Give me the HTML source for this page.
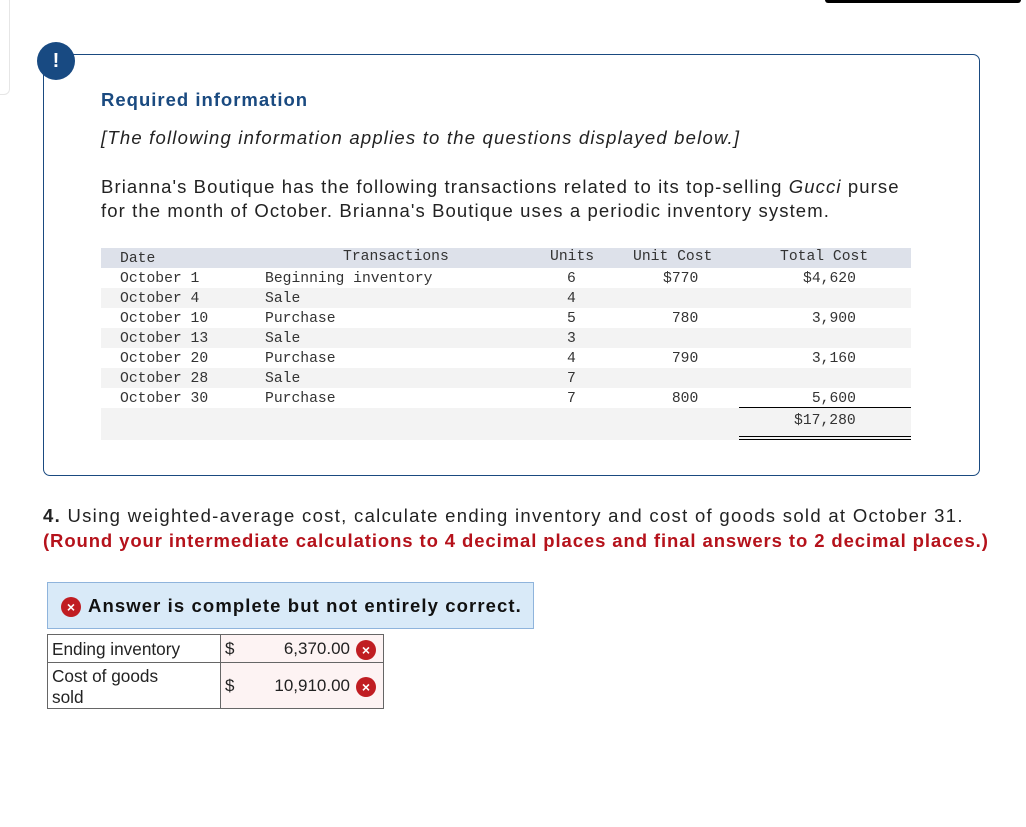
<!DOCTYPE html>
<html><head><meta charset="utf-8"><style>
*{margin:0;padding:0;box-sizing:border-box}
body{width:1026px;height:827px;background:#fff;position:relative;overflow:hidden;font-family:"Liberation Sans",sans-serif;color:#222}
.abs{position:absolute}
.card{left:43px;top:54px;width:937px;height:422px;border:1px solid #1a4a80;border-radius:7px}
.bang{left:37px;top:42px;width:38px;height:38px;border-radius:50%;background:#184a82;color:#fff;font-weight:bold;font-size:20px;text-align:center;line-height:38px}
.t{font-size:18.5px;white-space:nowrap;letter-spacing:1.1px}
.mono{font-family:"Liberation Mono",monospace;font-size:14.7px;color:#333;white-space:pre}
.row{position:absolute;left:101px;width:810px;height:20px}
</style></head><body>
<div class="abs" style="left:825px;top:0;width:196px;height:3px;background:#000;border-radius:0 0 3px 3px"></div>
<div class="abs" style="left:-10px;top:-5px;width:20px;height:100px;border:1px solid #e6e6e6;border-radius:6px"></div>
<div class="abs card"></div>
<div class="abs bang">!</div>
<div class="abs t" style="left:101px;top:89px;font-weight:bold;color:#1a4a80;letter-spacing:1px">Required information</div>
<div class="abs t" style="left:101px;top:127px;font-style:italic;letter-spacing:1.2px">[The following information applies to the questions displayed below.]</div>
<div class="abs t" style="left:101px;top:175px;line-height:24px">Brianna's Boutique has the following transactions related to its top-selling <i>Gucci</i> purse<br>for the month of October. Brianna's Boutique uses a periodic inventory system.</div>

<div class="row" style="top:248px;background:#dde1ea"></div>
<div class="row" style="top:288px;background:#f3f3f3"></div>
<div class="row" style="top:328px;background:#f3f3f3"></div>
<div class="row" style="top:368px;background:#f3f3f3"></div>
<div class="row" style="top:408px;height:32px;background:#f3f3f3"></div>
<div class="abs" style="left:739px;top:407px;width:172px;height:1px;background:#000"></div>
<div class="abs" style="left:739px;top:436px;width:172px;height:4px;border-top:1px solid #000;border-bottom:1px solid #000"></div>

<div class="abs mono" style="left:120px;top:249px;line-height:20px">Date
October 1
October 4
October 10
October 13
October 20
October 28
October 30</div>
<div class="abs mono" style="left:343px;top:249px">Transactions</div>
<div class="abs mono" style="left:265px;top:269px;line-height:20px">Beginning inventory
Sale
Purchase
Sale
Purchase
Sale
Purchase</div>
<div class="abs mono" style="left:550px;top:249px">Units</div>
<div class="abs mono" style="left:567px;top:269px;line-height:20px">6
4
5
3
4
7
7</div>
<div class="abs mono" style="left:633px;top:249px">Unit Cost</div>
<div class="abs mono" style="left:663px;top:269px;line-height:20px">$770

 780

 790

 800</div>
<div class="abs mono" style="left:780px;top:249px">Total Cost</div>
<div class="abs mono" style="left:803px;top:269px;line-height:20px">$4,620

 3,900

 3,160

 5,600</div>
<div class="abs mono" style="left:794px;top:413px">$17,280</div>

<div class="abs t" style="left:43px;top:503px;line-height:25px;letter-spacing:1.3px"><b>4.</b> Using weighted-average cost, calculate ending inventory and cost of goods sold at October 31.<br><b style="color:#b5121b;letter-spacing:0.9px">(Round your intermediate calculations to 4 decimal places and final answers to 2 decimal places.)</b></div>

<div class="abs" style="left:47px;top:582px;width:487px;height:47px;background:#d9eaf8;border:1px solid #8fb4dc"></div>
<div class="abs" style="left:61px;top:597px;width:20px;height:20px;border-radius:50%;background:#c01d22;color:#fff;font-size:14px;font-weight:bold;text-align:center;line-height:20px">×</div>
<div class="abs" style="left:88px;top:595px;font-size:18.5px;font-weight:bold;color:#111;letter-spacing:1.1px;white-space:nowrap">Answer is complete but not entirely correct.</div>

<div class="abs" style="left:47px;top:634px;width:337px;height:75px;border:1px solid #666"></div>
<div class="abs" style="left:221px;top:635px;width:162px;height:73px;background:#fdf3f3"></div>
<div class="abs" style="left:220px;top:634px;width:1px;height:75px;background:#666"></div>
<div class="abs" style="left:47px;top:662px;width:337px;height:1px;background:#666"></div>
<div class="abs" style="left:52px;top:639px;font-size:17.2px;color:#222">Ending inventory</div>
<div class="abs" style="left:52px;top:666px;font-size:17.2px;line-height:21px;color:#222">Cost of goods<br>sold</div>
<div class="abs" style="left:225px;top:639px;font-size:17px">$</div>
<div class="abs" style="left:225px;top:676px;font-size:17px">$</div>
<div class="abs" style="left:240px;top:639px;width:110px;text-align:right;font-size:17px">6,370.00</div>
<div class="abs" style="left:240px;top:676px;width:110px;text-align:right;font-size:17px">10,910.00</div>
<div class="abs" style="left:356px;top:640px;width:20px;height:20px;border-radius:50%;background:#c01d22;color:#fff;font-size:14px;font-weight:bold;text-align:center;line-height:20px">×</div>
<div class="abs" style="left:356px;top:677px;width:20px;height:20px;border-radius:50%;background:#c01d22;color:#fff;font-size:14px;font-weight:bold;text-align:center;line-height:20px">×</div>
</body></html>
